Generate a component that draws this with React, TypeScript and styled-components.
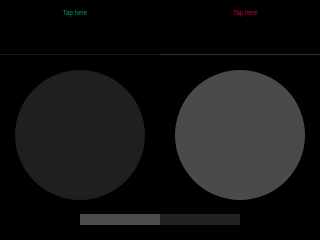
import React from "react";
import styled, { createGlobalStyle } from "styled-components";

const Global = createGlobalStyle`
  html, body { margin: 0; padding: 0; background: #000; }
  body { width: 320px; height: 240px; overflow: hidden; font-family: "Liberation Sans", Arial, sans-serif; }
`;

const Page = styled.div`
  width: 320px;
  height: 240px;
  background: #000;
  display: flex;
  flex-direction: column;
`;

const Header = styled.div`
  display: grid;
  grid-template-columns: 1fr 1fr;
`;

const TapZone = styled.div<{ $line: string; $color: string }>`
  box-sizing: border-box;
  height: 55px;
  padding-top: 9px;
  border-bottom: 1px solid ${(p) => p.$line};
  display: flex;
  justify-content: center;
  align-items: flex-start;
  color: ${(p) => p.$color};
  font-size: 6.3px;
  line-height: 7px;
`;

const Label = styled.span<{ $shift: number }>`
  display: inline-block;
  transform: translateX(${(p) => p.$shift}px);
`;

const Stage = styled.div`
  display: grid;
  grid-template-columns: 1fr 1fr;
  padding-top: 15px;
`;

const Cell = styled.div`
  display: flex;
  justify-content: center;
`;

const Circle = styled.div<{ $fill: string }>`
  width: 130px;
  height: 130px;
  border-radius: 50%;
  background: ${(p) => p.$fill};
`;

const Track = styled.div`
  margin: 14px auto 0;
  width: 160px;
  height: 11px;
  display: flex;
  background: #222;
`;

const Fill = styled.div`
  height: 100%;
  background: #4d4d4d;
`;

export default function App() {
  const progress = 0.5;
  return (
    <>
      <Global />
      <Page>
        <Header>
          <TapZone $line="#1a1a1a" $color="#0a9070">
            <Label $shift={-5}>Tap here</Label>
          </TapZone>
          <TapZone $line="#343434" $color="#b8083c">
            <Label $shift={5}>Tap here</Label>
          </TapZone>
        </Header>
        <Stage>
          <Cell>
            <Circle $fill="#1f1f1f" />
          </Cell>
          <Cell>
            <Circle $fill="#4a4a4a" />
          </Cell>
        </Stage>
        <Track>
          <Fill style={{ width: `${progress * 100}%` }} />
        </Track>
      </Page>
    </>
  );
}
